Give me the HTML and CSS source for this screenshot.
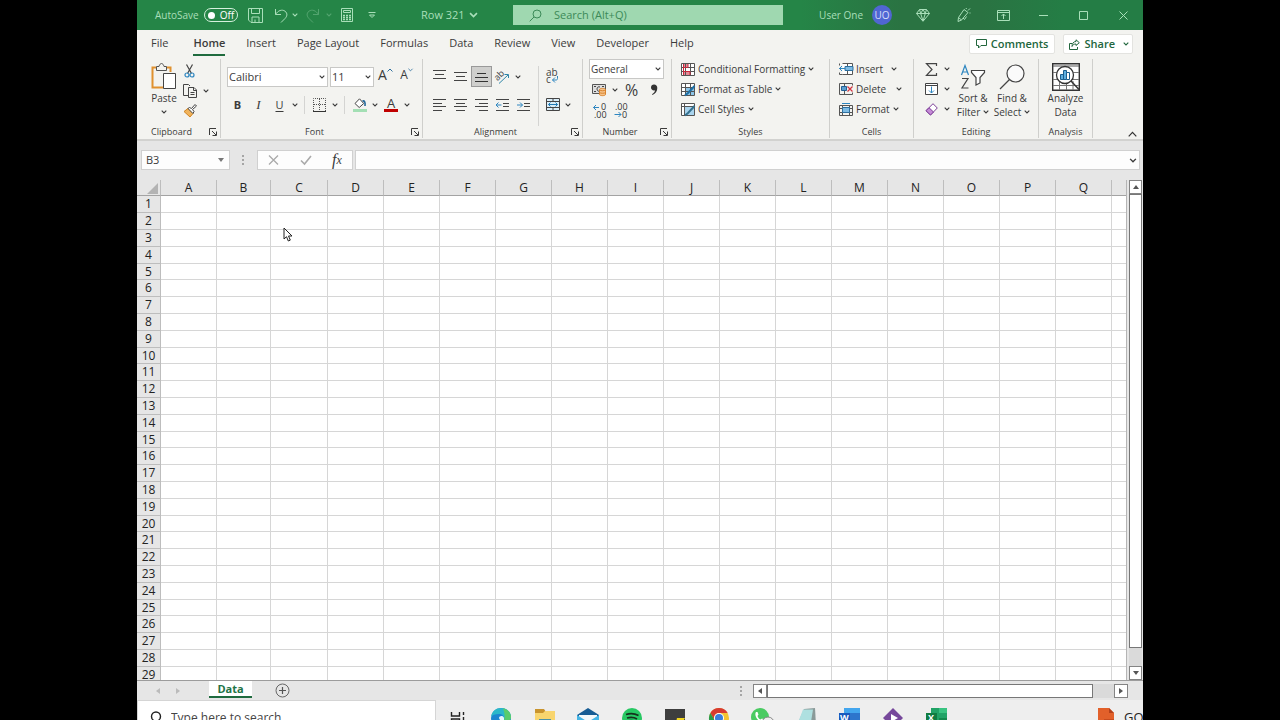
FILE: index.html
```html
<!DOCTYPE html>
<html lang="en">
<head>
    <meta charset="UTF-8">
    <meta name="viewport" content="width=device-width, initial-scale=1.0">
    <title>Row 321 - Excel</title>
    <link rel="stylesheet" href="styles.css">
</head>
<body>
    <svg class="symbols" aria-hidden="true">
        <symbol id="caret" viewBox="0 0 6 4"><path d="M.7.7 3 3 5.300.7" fill="none" stroke="currentColor" stroke-width="1.1"/></symbol>
        <symbol id="launcher" viewBox="0 0 8 8"><path d="M.5 7V.5H7M3 3l4 4M7.500 3.500v4h-4" fill="none" stroke="currentColor"/></symbol>
    </svg>

    <div class="window">
        <header class="titlebar">
            <div class="quick-access">
                <label class="autosave">AutoSave
                    <input type="checkbox" class="autosave-input">
                    <span class="toggle"><span class="knob"></span>Off</span>
                </label>
                <button class="quick-btn" aria-label="Save"><svg width="15" height="15" viewBox="0 0 15 15"><path d="M.5.5h14v14H3L.5 12zM3.500.5v5h8v-5M4 14.500V9h7v5.500M7 14v-2.500" /></svg></button>
                <button class="quick-btn undo" aria-label="Undo"><svg width="14" height="15" viewBox="0 0 14 15"><path d="M1.500 1v5.500H7M1.500 6.500C4 2.500 8 1 11 3.200c3 2.300 2 5.300 0 7.300L7 14.500"/></svg></button>
                <button class="quick-caret" aria-label="Undo options"><svg width="6" height="4"><use href="#caret"/></svg></button>
                <button class="quick-btn faded" aria-label="Redo"><svg width="14" height="15" viewBox="0 0 14 15"><path d="M12.500 1v5.500H7M12.500 6.500C10 2.500 6 1 3 3.200c-3 2.300-2 5.300 0 7.300l4 4"/></svg></button>
                <button class="quick-caret faded" aria-label="Redo options"><svg width="6" height="4"><use href="#caret"/></svg></button>
                <button class="quick-btn calc" aria-label="Calculator"><svg width="12" height="14" viewBox="0 0 12 14"><path d="M.5.5h11v13H.5zM2.500 2.500h7v2h-7z"/><path d="M2 7.500h8M2 9.500h8M2 11.500h8" stroke-width="1.500" stroke-dasharray="2 1"/></svg></button>
                <button class="quick-btn" aria-label="Customize toolbar"><svg width="8" height="7" viewBox="0 0 8 7"><path d="M.5.5h7M1.500 3 4 5.500 6.500 3z"/></svg></button>
            </div>
            <button class="doc-title">Row 321 <svg width="9" height="6"><use href="#caret"/></svg></button>
            <label class="search">
                <svg width="13" height="13" viewBox="0 0 13 13"><circle cx="8" cy="5" r="4"/><path d="M5 8 .7 12.300"/></svg>
                <input type="search" placeholder="Search (Alt+Q)" aria-label="Search">
            </label>
            <div class="account">User One <span class="avatar">UO</span></div>
            <div class="window-buttons">
                <button aria-label="Premium"><svg width="14" height="13" viewBox="0 0 14 13"><path d="M3.500.5h7l3 4L7 12.300.5 4.500zM.5 4.500h13M3.500.5l1.200 4L7 12l2.300-7.500 1.200-4M4.700 4.500 7 .5l2.300 4"/></svg></button>
                <button aria-label="Draw"><svg width="15" height="14" viewBox="0 0 15 14"><path d="M8 1.500 2.500 9.500l-.5 4 3.500-1.500 6.500-7.500zM2.500 9.500l3 2.500M7 10l1.500 1.500 2-3M10 1l.5-1M12 2.500 14 .5M13.500 5h1"/></svg></button>
                <button aria-label="Ribbon display"><svg width="13" height="11" viewBox="0 0 13 11"><path d="M.5.5h12v10H.5zM.5 2.500h12M6.500 9V4M4.500 6l2-2 2 2"/></svg></button>
                <button aria-label="Minimize"><svg width="9" height="9" viewBox="0 0 9 9"><path d="M0 4.500h9"/></svg></button>
                <button aria-label="Maximize"><svg width="9" height="9" viewBox="0 0 9 9"><path d="M.5.5h8v8h-8z"/></svg></button>
                <button aria-label="Close"><svg width="9" height="9" viewBox="0 0 9 9"><path d="m.5.5 8 8M8.500.5l-8 8"/></svg></button>
            </div>
        </header>

        <nav class="tabs">
            <a href="#" class="tab tab-file">File</a>
            <a href="#" class="tab active">Home</a>
            <a href="#" class="tab">Insert</a>
            <a href="#" class="tab">Page Layout</a>
            <a href="#" class="tab">Formulas</a>
            <a href="#" class="tab">Data</a>
            <a href="#" class="tab">Review</a>
            <a href="#" class="tab">View</a>
            <a href="#" class="tab">Developer</a>
            <a href="#" class="tab">Help</a>
            <div class="tab-actions">
                <button class="action"><svg width="11" height="10" viewBox="0 0 11 10"><path d="M.5.5h10v6H5l-2.500 2.500V6.500h-2z"/></svg>Comments</button>
                <button class="action share"><svg width="11" height="11" viewBox="0 0 11 11"><path d="M3 4.500H.5v6h8V8M7 .8l3.300 2.900L7 6.500V5C5 5 4 5.500 3 7.500 3 4.500 4.500 2.500 7 2.500z"/></svg>Share <svg width="6" height="4"><use href="#caret"/></svg></button>
            </div>
        </nav>

        <div class="ribbon">
            <section class="group clipboard">
                <div class="group-body">
                    <button class="big-btn">
                        <svg width="26" height="28" viewBox="0 0 26 28"><path d="M5 4.500H1.500v20H12M16 4.500h3.500V9" fill="none" stroke="#e0912f" stroke-width="2"/><path d="M5.500 7.500v-4H8C8.500 1.500 9.500.5 10.500.5s2 1 2.500 3h2.500v4z" fill="#f3f3f0" stroke="#555"/><path d="M12.500 10.500h12v15h-12z" fill="#fff" stroke="#444"/></svg>
                        <span>Paste</span>
                        <svg width="6" height="4"><use href="#caret"/></svg>
                    </button>
                    <div class="stack">
                        <button aria-label="Cut"><svg width="13" height="14" viewBox="0 0 13 14"><path d="m3.500.5 5 9M9.500.5l-5 9" fill="none" stroke="#444" stroke-width="1.200"/><circle cx="4" cy="11" r="2" fill="none" stroke="#2e86c0" stroke-width="1.200"/><circle cx="9" cy="11" r="2" fill="none" stroke="#2e86c0" stroke-width="1.200"/></svg></button>
                        <button aria-label="Copy"><svg width="14" height="14" viewBox="0 0 14 14"><path d="M5 11.500H.5V.5h5L7 2" fill="none" stroke="#444"/><path d="M5.500 3.500H11l2.500 2.500v7.500h-8zM10.500 3.500v3h3M7.500 8.500h4M7.500 10.500h4" fill="none" stroke="#444"/></svg><svg width="6" height="4"><use href="#caret"/></svg></button>
                        <button aria-label="Format Painter"><svg width="14" height="14" viewBox="0 0 14 14"><path d="M1 7.500 5 4.500l5 5L7 13z" fill="#f0b35c" stroke="#d28420"/><path d="m5 4.500 1.500-1 2 1 3.500-4L13.500 2 9.500 5.500l1.500 2-1 2z" fill="#fff" stroke="#444"/></svg></button>
                    </div>
                </div>
                <footer><span>Clipboard</span><button class="launch" aria-label="Clipboard settings"><svg width="8" height="8"><use href="#launcher"/></svg></button></footer>
            </section>

            <section class="group font">
                <div class="group-body">
                    <div class="tool-row">
                        <div class="dropdown font-name"><select aria-label="Font"><option>Calibri</option></select><svg width="6" height="4"><use href="#caret"/></svg></div>
                        <div class="dropdown font-size"><select aria-label="Font size"><option>11</option></select><svg width="6" height="4"><use href="#caret"/></svg></div>
                        <button class="tool grow" aria-label="Increase font size"><span>A</span><svg width="6" height="4" viewBox="0 0 6 4"><path d="M.5 3.500 3 1l2.500 2.500" fill="none" stroke="#2e6f9e"/></svg></button>
                        <button class="tool shrink" aria-label="Decrease font size"><span>A</span><svg width="5" height="4" viewBox="0 0 6 4"><path d="M.5.5 3 3 5.500.5" fill="none" stroke="#2e6f9e"/></svg></button>
                    </div>
                    <div class="tool-row">
                        <button class="tool bold">B</button>
                        <button class="tool italic">I</button>
                        <button class="tool underline">U</button>
                        <button class="tool-caret" aria-label="Underline options"><svg width="6" height="4"><use href="#caret"/></svg></button>
                        <span class="divider"></span>
                        <button class="tool" aria-label="Borders"><svg width="13" height="14" viewBox="0 0 13 14"><path d="M.5 13V.5h12V13M6.500 1v12M1 6.500h11" fill="none" stroke="#555" stroke-dasharray="1 1"/><path d="M0 13.500h13" stroke="#333"/></svg></button>
                        <button class="tool-caret" aria-label="Border options"><svg width="6" height="4"><use href="#caret"/></svg></button>
                        <span class="divider"></span>
                        <button class="tool" aria-label="Fill color"><svg width="14" height="14" viewBox="0 0 14 14"><path d="M0 11h14v3H0z" fill="#a3dfb4"/><path d="m6.500.8 4.200 4.700-4.500 4L2 5.500z" fill="#fff" stroke="#444"/><path d="M9.500 3c2-.5 3 1 2.500 5" fill="none" stroke="#24699a" stroke-width="1.600"/></svg></button>
                        <button class="tool-caret" aria-label="Fill options"><svg width="6" height="4"><use href="#caret"/></svg></button>
                        <button class="tool font-color">A</button>
                        <button class="tool-caret" aria-label="Font color options"><svg width="6" height="4"><use href="#caret"/></svg></button>
                    </div>
                </div>
                <footer><span>Font</span><button class="launch" aria-label="Font settings"><svg width="8" height="8"><use href="#launcher"/></svg></button></footer>
            </section>

            <section class="group alignment">
                <div class="group-body">
                    <div class="align-main">
                        <div class="tool-row">
                            <button class="tool" aria-label="Top align"><svg width="13" height="13" viewBox="0 0 13 13"><path d="M0 .5h13M2 4.500h9M0 8.500h13" stroke="#444"/></svg></button>
                            <button class="tool" aria-label="Middle align"><svg width="13" height="13" viewBox="0 0 13 13"><path d="M0 2.500h13M2 6.500h9M0 10.500h13" stroke="#444"/></svg></button>
                            <button class="tool pressed" aria-label="Bottom align"><svg width="13" height="13" viewBox="0 0 13 13"><path d="M2 3.500h9M0 7.500h13M0 11.500h13" stroke="#333"/></svg></button>
                            <button class="tool" aria-label="Orientation"><svg width="15" height="14" viewBox="0 0 15 14"><text x="0" y="9" font-size="9" fill="#444" transform="rotate(-45 4 7)">ab</text><path d="M4 13.500 13 5M9.500 4.500H13.500V8" fill="none" stroke="#2e86a8"/></svg></button>
                            <button class="tool-caret" aria-label="Orientation options"><svg width="6" height="4"><use href="#caret"/></svg></button>
                        </div>
                        <div class="tool-row">
                            <button class="tool" aria-label="Align left"><svg width="13" height="12" viewBox="0 0 13 12"><path d="M0 .5h13M0 4.500h9M0 7.500h13M0 11.500h9" stroke="#444"/></svg></button>
                            <button class="tool" aria-label="Center"><svg width="13" height="12" viewBox="0 0 13 12"><path d="M0 .5h13M2 4.500h9M0 7.500h13M2 11.500h9" stroke="#444"/></svg></button>
                            <button class="tool" aria-label="Align right"><svg width="13" height="12" viewBox="0 0 13 12"><path d="M0 .5h13M4 4.500h9M0 7.500h13M4 11.500h9" stroke="#444"/></svg></button>
                            <button class="tool" aria-label="Decrease indent"><svg width="13" height="12" viewBox="0 0 13 12"><path d="M0 .5h13M7 4.500h6M7 7.500h6M0 11.500h13" stroke="#444"/><path d="M0 6h5.500M2.500 3.500 0 6l2.500 2.500" fill="none" stroke="#2e86c0"/></svg></button>
                            <button class="tool" aria-label="Increase indent"><svg width="13" height="12" viewBox="0 0 13 12"><path d="M0 .5h13M7 4.500h6M7 7.500h6M0 11.500h13" stroke="#444"/><path d="M0 6h5.500M3 3.500 5.500 6 3 8.500" fill="none" stroke="#2e86c0"/></svg></button>
                        </div>
                    </div>
                    <div class="align-side">
                        <div class="tool-row">
                            <button class="tool" aria-label="Wrap text"><svg width="13" height="15" viewBox="0 0 13 15"><text x="0" y="7" font-size="10" fill="#444">ab</text><text x="0" y="14" font-size="10" fill="#444">c</text><path d="M11.500 7v2.500c0 1-.5 1.500-1.500 1.500H6.500M9 8.500 6.500 11 9 13.500" fill="none" stroke="#2e86c0"/></svg></button>
                        </div>
                        <div class="tool-row">
                            <button class="tool" aria-label="Merge"><svg width="14" height="13" viewBox="0 0 14 13"><path d="M.5.5h13v12H.5z" fill="#d9edf8" stroke="#444"/><path d="M.5 3.500h13M.5 9.500h13M7 .5v3M7 9.500v3" stroke="#444"/><path d="M2.500 6.500h9M4.500 4.500l-2 2 2 2M9.500 4.500l2 2-2 2" fill="none" stroke="#1f7ab5"/></svg></button>
                            <button class="tool-caret" aria-label="Merge options"><svg width="6" height="4"><use href="#caret"/></svg></button>
                        </div>
                    </div>
                </div>
                <footer><span>Alignment</span><button class="launch" aria-label="Alignment settings"><svg width="8" height="8"><use href="#launcher"/></svg></button></footer>
            </section>

            <section class="group number">
                <div class="group-body">
                    <div class="dropdown"><select aria-label="Number format"><option>General</option></select><svg width="6" height="4"><use href="#caret"/></svg></div>
                    <div class="tool-row">
                        <button class="tool" aria-label="Accounting format"><svg width="15" height="12" viewBox="0 0 15 12"><path d="M.5.5h13v9H.5z" fill="#ddd" stroke="#555"/><path d="M2 2.500h2M2 7.500h2M8 3C6 2 5 4 5 5s1 3 3 2M10 2.500h2" fill="none" stroke="#444"/><path d="M7.500 5.500c0-1.500 6-1.500 6 0v5c0 1.500-6 1.500-6 0z" fill="#f6c48b" stroke="#d9822b"/><path d="M7.500 6c1 1 5 1 6 0M7.500 8.500c1 1 5 1 6 0" fill="none" stroke="#d9822b"/></svg></button>
                        <button class="tool-caret" aria-label="Accounting options"><svg width="6" height="4"><use href="#caret"/></svg></button>
                        <button class="tool percent">%</button>
                        <button class="tool" aria-label="Comma style"><svg width="8" height="12" viewBox="0 0 8 12"><path d="M4 .5c2 0 3.300 1.300 3.300 3.500 0 3-1.800 5.800-4.800 7l-.5-.8C4 9 5 7.700 5 6.300 3 7 1 5.700 1 3.600 1 1.800 2.200.5 4 .5z" fill="#333"/></svg></button>
                    </div>
                    <div class="tool-row">
                        <button class="tool" aria-label="Increase decimal"><svg width="14" height="14" viewBox="0 0 14 14"><text x="8" y="6" font-size="9" fill="#333">0</text><text x="1" y="14" font-size="9" fill="#333">.00</text><path d="M.5 3.500H6M3 1 .5 3.500 3 6" fill="none" stroke="#2e86c0"/></svg></button>
                        <button class="tool" aria-label="Decrease decimal"><svg width="14" height="14" viewBox="0 0 14 14"><text x="1" y="6" font-size="9" fill="#333">.00</text><text x="8" y="14" font-size="9" fill="#333">0</text><path d="M.5 10.500H7M4.500 8 7 10.500 4.500 13" fill="none" stroke="#2e86c0"/></svg></button>
                    </div>
                </div>
                <footer><span>Number</span><button class="launch" aria-label="Number settings"><svg width="8" height="8"><use href="#launcher"/></svg></button></footer>
            </section>

            <section class="group styles">
                <div class="group-body">
                    <button class="row-btn"><svg width="14" height="13" viewBox="0 0 14 13"><path d="M.5.5h13v12H.5z" fill="#fff" stroke="#555"/><path d="M2 1h5v3H2zM2 8h7v4H2z" fill="#e58a96"/><path d="M.5 4.500h13M.5 8.500h13M4.500.5v12M9.500.5v12" stroke="#555"/><path d="M2.500 1v11M2.500 4.500H7V1M2.500 8.500H9V12" fill="none" stroke="#c8283c"/></svg>Conditional Formatting<svg class="arrow" width="6" height="4"><use href="#caret"/></svg></button>
                    <button class="row-btn"><svg width="14" height="13" viewBox="0 0 14 13"><path d="M.5.5h13v12H.5z" fill="#fff" stroke="#555"/><path d="M5 4h8v8H5z" fill="#8cc6ea"/><path d="M.5 4.500h13M.5 8.500h13M4.500.5v12M9.500.5v12" stroke="#555"/><path d="M13.500 3 7 10l-3 2.500" stroke="#1d6fa5" stroke-width="2" fill="none"/></svg>Format as Table<svg class="arrow" width="6" height="4"><use href="#caret"/></svg></button>
                    <button class="row-btn"><svg width="14" height="13" viewBox="0 0 14 13"><path d="M.5.5h13v12H.5z" fill="#fff" stroke="#555"/><path d="M4 4h9v8H4z" fill="#a9d4ee"/><path d="M.5 3.500h13M3.500.5v12" stroke="#555"/><path d="M13.500 3 7 10l-3 2.500" stroke="#35718f" stroke-width="2" fill="none"/></svg>Cell Styles<svg class="arrow" width="6" height="4"><use href="#caret"/></svg></button>
                </div>
                <footer><span>Styles</span></footer>
            </section>

            <section class="group cells">
                <div class="group-body">
                    <button class="row-btn"><svg width="14" height="12" viewBox="0 0 14 12"><path d="M3.500.5h10v11h-10M.5.5v2M.5 9.500v2h3M8.500.5v11" fill="#fff" stroke="#555"/><path d="M6 3.500h8v4H6z" fill="#7dbbe4" stroke="#2e6f9e"/><path d="M0 5.500h6M3 3 .5 5.500 3 8" fill="none" stroke="#2e86c0"/></svg><span>Insert</span><svg class="arrow" width="6" height="4"><use href="#caret"/></svg></button>
                    <button class="row-btn wide"><svg width="14" height="12" viewBox="0 0 14 12"><path d="M.5.5h13M.5 11.500h13M.5.5v11M5.500.5v11M13.500.5v2M13.500 9.500v2" stroke="#555"/><path d="M2.500 3.500h5v4h-5z" fill="#5b9fd0" stroke="#245f94"/><path d="m8.500 3.500 5 5M13.500 3.500l-5 5" stroke="#d1343f" stroke-width="1.200"/></svg><span>Delete</span><svg class="arrow" width="6" height="4"><use href="#caret"/></svg></button>
                    <button class="row-btn"><svg width="14" height="13" viewBox="0 0 14 13"><path d="M.5 2.500h13v10H.5zM3.500 2v10.500M10.500 2v10.500M.5 9.500h13M.5 5.500h13" fill="none" stroke="#555"/><path d="M3.500 4.500h7v5h-7z" fill="#7dbbe4" stroke="#2e6f9e"/><path d="M3 .5h8" stroke="#2e86c0"/></svg><span>Format</span><svg class="arrow" width="6" height="4"><use href="#caret"/></svg></button>
                </div>
                <footer><span>Cells</span></footer>
            </section>

            <section class="group editing">
                <div class="group-body">
                    <div class="stack">
                        <button aria-label="AutoSum"><svg width="13" height="13" viewBox="0 0 13 13"><path d="M11.500 3V.7H1.500L7 6.500l-5.500 5.800h10V10" fill="none" stroke="#444" stroke-width="1.200"/></svg><svg width="6" height="4"><use href="#caret"/></svg></button>
                        <button aria-label="Fill"><svg width="13" height="12" viewBox="0 0 13 12"><path d="M.5.5h12v11H.5zM.5 2.500h12" fill="#fff" stroke="#444"/><path d="M6.500 3.500V10M4 7.500 6.500 10 9 7.500" fill="none" stroke="#2e86c0"/></svg><svg width="6" height="4"><use href="#caret"/></svg></button>
                        <button aria-label="Clear"><svg width="13" height="13" viewBox="0 0 13 13"><path d="M8 .7 12.300 5 5.500 12 1 7.700z" fill="#fff" stroke="#7b3c96"/><path d="M4 4.700 8.500 9l-3 3L1 7.700z" fill="#c58ad6" stroke="#7b3c96"/></svg><svg width="6" height="4"><use href="#caret"/></svg></button>
                    </div>
                    <button class="big-btn sort">
                        <svg width="26" height="28" viewBox="0 0 26 28"><path d="M1.500 12 5 2.500 8.500 12M2.700 9h4.600" fill="none" stroke="#2e86c0" stroke-width="1.200"/><path d="M2 15.500h6L2 25h6.500" fill="none" stroke="#444" stroke-width="1.200"/><path d="M11.500 7.500h13v2L20 14.500V20l-4 2v-7.500l-4.500-5z" fill="#fff" stroke="#444" stroke-width="1.200"/></svg>
                        <span>Sort &amp;</span><span>Filter <svg width="6" height="4"><use href="#caret"/></svg></span>
                    </button>
                    <button class="big-btn">
                        <svg width="26" height="28" viewBox="0 0 26 28"><circle cx="16.500" cy="10.500" r="8.500" fill="#fafafa" stroke="#444" stroke-width="1.200"/><path d="M10.500 16.500 1 26" stroke="#444" stroke-width="1.300"/></svg>
                        <span>Find &amp;</span><span>Select <svg width="6" height="4"><use href="#caret"/></svg></span>
                    </button>
                </div>
                <footer><span>Editing</span></footer>
            </section>

            <section class="group analysis">
                <div class="group-body">
                    <button class="big-btn">
                        <svg width="28" height="28" viewBox="0 0 28 28"><path d="M.7.7h26.600v26.600H.7z" fill="#fff" stroke="#333" stroke-width="1.400"/><path d="M1 3h26" stroke="#555" stroke-width="1"/><path d="M1 9.500h26M1 16.500h26M1 22.500h26M7.500 18v9M14.500 18v9M21 18v9" stroke="#777"/><circle cx="13" cy="12" r="8.500" fill="#fff" stroke="#333" stroke-width="1.300"/><path d="m19 18 8 8.500" stroke="#333" stroke-width="1.500"/><path d="M8.500 11.500h3v5h-3zM11.500 7.500h3v9h-3z" fill="#5fafe0" stroke="#1c5f8e"/><path d="M14.500 9.500h3v7h-3z" fill="#fff" stroke="#1c5f8e"/></svg>
                        <span>Analyze</span><span>Data</span>
                    </button>
                </div>
                <footer><span>Analysis</span></footer>
            </section>
            <button class="collapse" aria-label="Collapse the ribbon"><svg width="9" height="6" viewBox="0 0 9 6"><path d="m.7 5.300 3.800-4 3.800 4" fill="none" stroke="#333" stroke-width="1.200"/></svg></button>
        </div>

        <div class="formula-bar">
            <div class="name-box">
                <input type="text" value="B3" aria-label="Name box">
                <svg width="6" height="4" viewBox="0 0 6 4"><path d="M0 0h6L3 4z" fill="#777"/></svg>
            </div>
            <span class="grip"></span>
            <div class="entry-buttons">
                <button aria-label="Cancel"><svg width="11" height="10" viewBox="0 0 11 10"><path d="m1 .5 9 9M10 .5l-9 9" stroke="#aaa" stroke-width="1.300"/></svg></button>
                <button aria-label="Enter"><svg width="12" height="10" viewBox="0 0 12 10"><path d="m1 5.500 3.500 3.500L11 1" fill="none" stroke="#aaa" stroke-width="1.600"/></svg></button>
                <button class="fx" aria-label="Insert function">f<small>x</small></button>
            </div>
            <div class="formula">
                <input type="text" aria-label="Formula">
                <svg width="8" height="5"><use href="#caret"/></svg>
            </div>
        </div>

        <main class="workbook">
            <div class="sheet">
                <table class="grid">
                    <colgroup>
                        <col class="col-head"><col><col class="col-b"><col class="col-c"><col><col><col><col><col><col><col><col><col><col><col><col><col><col><col class="col-rest">
                    </colgroup>
                    <thead>
                        <tr id="letters"><th class="corner"><svg width="11" height="11" viewBox="0 0 11 11"><path d="M11 0v11H0z" fill="#b3b3b3"/></svg></th></tr>
                    </thead>
                    <tbody id="rows"></tbody>
                </table>
            </div>
            <div class="scroll-y">
                <button aria-label="Scroll up"><svg width="6" height="4" viewBox="0 0 6 4"><path d="M0 4h6L3 0z"/></svg></button>
                <span class="thumb"></span>
                <button aria-label="Scroll down"><svg width="6" height="4" viewBox="0 0 6 4"><path d="M0 0h6L3 4z"/></svg></button>
            </div>
        </main>

        <div class="sheet-bar">
            <div class="sheet-nav">
                <button aria-label="Previous sheet"><svg width="4" height="6" viewBox="0 0 4 6"><path d="M4 0v6L0 3z"/></svg></button>
                <button aria-label="Next sheet"><svg width="4" height="6" viewBox="0 0 4 6"><path d="M0 0v6l4-3z"/></svg></button>
            </div>
            <button class="sheet-tab">Data</button>
            <button class="add-sheet" aria-label="New sheet"><svg width="15" height="15" viewBox="0 0 15 15"><circle cx="7.500" cy="7.500" r="6.500" fill="none" stroke="#666"/><path d="M7.500 4v7M4 7.500h7" stroke="#555" stroke-width="1.200"/></svg></button>
            <span class="grip"></span>
            <div class="scroll-x">
                <button aria-label="Scroll left"><svg width="4" height="6" viewBox="0 0 4 6"><path d="M4 0v6L0 3z"/></svg></button>
                <span class="thumb"></span>
                <button aria-label="Scroll right"><svg width="4" height="6" viewBox="0 0 4 6"><path d="M0 0v6l4-3z"/></svg></button>
            </div>
        </div>

        <footer class="taskbar">
            <label class="task-search">
                <svg width="13" height="14" viewBox="0 0 13 14"><circle cx="7" cy="5.500" r="4.500"/><path d="M4 9 .7 13"/></svg>
                <input type="text" placeholder="Type here to search" aria-label="Type here to search">
            </label>
            <div class="apps">
                <button aria-label="Task view"><svg width="16" height="20" viewBox="0 0 16 20"><path d="M1.500 4v4h8V4M1.500 19v-8h8v8M13.500 4v3M13.500 9v3M13.500 14v5" fill="none" stroke="#222" stroke-width="1.400"/></svg></button>
                <button aria-label="Edge"><svg width="20" height="20" viewBox="0 0 20 20"><circle cx="10" cy="10" r="10" fill="#1c86cf"/><path d="M0 9C1 3 5 0 10 0c6 0 10 4 10 9 0 4-4 5-7 4 1-4-1-7-5-7-4 0-7 1-8 3z" fill="#2bb8c9"/><path d="M12 .2C17 1 20 5 20 9c0 4-4 5-7 4 1-4 1-7-1-12.800z" fill="#59cc6b"/><path d="M8 10c0-2 4-3 5 0v2h-4z" fill="#e8f5fa"/></svg></button>
                <button aria-label="File Explorer"><svg width="20" height="18" viewBox="0 0 20 18"><path d="M0 0h9l2 3h9v15H0z" fill="#c9942e"/><path d="M0 4h8l2-2h10v16H0z" fill="#f8d56e"/><path d="M4 10h12v8H4z" fill="#4d93a8"/></svg></button>
                <button aria-label="Mail"><svg width="22" height="20" viewBox="0 0 22 20"><path d="M0 7 11 0l11 7v13H0z" fill="#175c94"/><path d="M2 7h18v10H2z" fill="#f4f8fa"/><path d="m0 7 11 7 11-7v13H0z" fill="#45b5e6"/></svg></button>
                <button aria-label="Spotify"><svg width="20" height="20" viewBox="0 0 20 20"><circle cx="10" cy="10" r="10" fill="#27c863"/><path d="M4 6.500c5-1.500 9-.8 12.500 1M5 10c4-1 7.500-.5 10 1M6 13c3-.8 6-.3 8 1" fill="none" stroke="#15301e" stroke-width="1.800"/></svg></button>
                <button aria-label="Sticky Notes"><svg width="20" height="18" viewBox="0 0 20 18"><path d="M0 0h20v18H0z" fill="#3e3e3e"/><path d="M12 9h8l-5 9h-5z" fill="#f2d51e"/></svg></button>
                <button aria-label="Chrome"><svg width="20" height="20" viewBox="0 0 20 20"><circle cx="10" cy="10" r="10" fill="#f5c431"/><path d="M10 0a10 10 0 0 1 8.700 5H10a5 5 0 0 0-4.300 7.500L1.300 5A10 10 0 0 1 10 0z" fill="#d83b30"/><path d="m1.300 5 5.500 9 2 6A10 10 0 0 1 1.300 5z" fill="#2c9c4b"/><circle cx="10" cy="10" r="5" fill="#fff"/><circle cx="10" cy="10" r="4" fill="#3c7fdd"/></svg></button>
                <button aria-label="WhatsApp"><svg width="22" height="20" viewBox="0 0 22 20"><circle cx="9" cy="9" r="9" fill="#4acb62"/><path d="M5 4c-2 3 1 9 6 10 2 0 3-1 3-2l-3-1.500-1.500 1C8 11 7 9.500 6.500 8l1-1.500L6.500 4z" fill="#fff"/><circle cx="17" cy="15" r="6" fill="#eee" stroke="#888"/></svg></button>
                <button aria-label="Notepad"><svg width="20" height="20" viewBox="0 0 20 20"><path d="m8 1 11-1 1 17-5 3H0z" fill="#8a9a99"/><path d="M7 1.500h10L14 20H0z" fill="#aee0e0"/></svg></button>
                <button aria-label="Word"><svg width="21" height="20" viewBox="0 0 21 20"><path d="M5 0h16v20H5z" fill="#2d75cc"/><path d="M5 0h16v5H5z" fill="#43a6ee"/><path d="M0 5h11v11H0z" fill="#185abd"/><text x="1" y="13" font-size="9" font-weight="700" fill="#fff">W</text></svg></button>
                <button aria-label="Video Editor"><svg width="20" height="20" viewBox="0 0 20 20"><path d="m10 0 10 10-10 10L0 10z" fill="#76489b"/><path d="m8 6 7 4-7 4z" fill="#fff"/></svg></button>
                <button aria-label="Excel"><svg width="21" height="20" viewBox="0 0 21 20"><path d="M5 0h16v20H5z" fill="#21a366"/><path d="M13 0h8v5h-8z" fill="#39c481"/><path d="M13 10h8v10h-8z" fill="#13884b"/><path d="M0 5h11v11H0z" fill="#107c41"/><text x="2" y="13" font-size="9" font-weight="700" fill="#fff">X</text></svg></button>
            </div>
            <button class="tray-app" aria-label="Presentation"><svg width="16" height="20" viewBox="0 0 16 20"><path d="M0 0h11l5 5v15H0z" fill="#e2602a"/><path d="m11 0 5 5h-5z" fill="#b3401a"/><path d="M6 11h10v9H6z" fill="#c84b1e"/></svg></button>
            <span class="tray-text">GO</span>
        </footer>

        <svg class="pointer" width="10" height="15" viewBox="0 0 10 15"><path d="M1 1v11l2.500-2.300L5.300 14l2-.9-1.800-4.100H9z" fill="#fff" stroke="#222"/></svg>
    </div>

    <script>
        const columns = 'ABCDEFGHIJKLMNOPQ'.split('').concat('');
        const rowCount = 29;

        const letters = document.getElementById('letters');
        columns.forEach(name => {
            const th = document.createElement('th');
            th.textContent = name;
            letters.appendChild(th);
        });

        const rows = document.getElementById('rows');
        for (let i = 1; i <= rowCount; i++) {
            const tr = document.createElement('tr');
            tr.innerHTML = `<th>${i}</th>` + '<td></td>'.repeat(columns.length);
            rows.appendChild(tr);
        }
    </script>
</body>
</html>
```

FILE: styles.css
```css
* {
    margin: 0;
    padding: 0;
    box-sizing: border-box;
}

body {
    background: #000;
    padding: 0 137px;
    height: 100vh;
    overflow: hidden;
    font-family: "Open Sans", "Noto Sans", sans-serif;
    font-size: 11px;
    line-height: 14px;
    color: #3b3b3b;
}

button,
input,
select {
    font: inherit;
    color: inherit;
    background: none;
    border: none;
    outline: none;
    min-width: 0;
}

button {
    display: flex;
    align-items: center;
    justify-content: center;
    cursor: pointer;
}

svg {
    display: block;
    flex: none;
    overflow: visible;
}

a {
    color: inherit;
    text-decoration: none;
}

.symbols {
    display: none;
}

.window {
    position: relative;
    display: flex;
    flex-direction: column;
    height: 100%;
    overflow: hidden;
    background: #e6e6e6;
}

/* title bar */

.titlebar {
    flex: 0 0 30px;
    display: flex;
    align-items: center;
    background: linear-gradient(to right, #258547 0 66%, #2a7342 76% 84%, #247d45 92%);
    color: #a9dfb9;
}

.titlebar svg {
    fill: none;
    stroke: currentColor;
}

.quick-access {
    flex: 0 0 284px;
    display: flex;
    align-items: center;
    padding-left: 18px;
}

.autosave {
    display: flex;
    align-items: center;
    gap: 5px;
    margin-right: 10px;
    font-size: 10px;
}

.autosave-input {
    position: absolute;
    opacity: 0;
}

.toggle {
    display: flex;
    align-items: center;
    gap: 5px;
    width: 34px;
    height: 14px;
    padding-left: 3px;
    border: 1px solid #d5f0dc;
    border-radius: 7px;
    font-size: 10px;
    color: #fff;
}

.knob {
    width: 7px;
    height: 7px;
    border-radius: 50%;
    background: #fff;
}

.quick-btn {
    width: 16px;
    margin-right: 9px;
}

.undo {
    margin-right: 2px;
}

.quick-caret {
    width: 8px;
    margin-right: 6px;
}

.quick-btn.faded {
    margin-right: 4px;
}

.calc {
    margin-right: 9px;
}

.faded {
    opacity: .35;
}

.doc-title {
    flex: 0 0 92px;
    justify-content: flex-start;
    gap: 4px;
}

.search {
    flex: 1;
    display: flex;
    align-items: center;
    gap: 12px;
    height: 20px;
    padding-left: 16px;
    background: #9fd8b0;
    color: #3c8a58;
}

.search input {
    flex: 1;
    appearance: none;
}

.search input::placeholder {
    color: #3c8a58;
}

.account {
    display: flex;
    align-items: center;
    gap: 9px;
    padding: 0 11px 0 36px;
    font-size: 10px;
}

.avatar {
    width: 20px;
    height: 20px;
    border-radius: 50%;
    background: #5066d2;
    color: #d7defa;
    font-size: 10px;
    line-height: 20px;
    text-align: center;
}

.window-buttons {
    display: flex;
}

.window-buttons button {
    width: 40px;
    height: 30px;
}

/* ribbon tabs */

.tabs {
    flex: 0 0 28px;
    display: flex;
    align-items: center;
    gap: 21px;
    padding: 0 10px 0 14px;
    background: #f3f3f0;
}

.tab {
    padding: 4px 0;
    border-bottom: 2px solid transparent;
}

.tab-file {
    margin-right: 4px;
}

.tab.active {
    font-weight: 600;
    border-color: #1f6b3e;
}

.tab-actions {
    display: flex;
    gap: 8px;
    margin-left: auto;
}

.action {
    gap: 4px;
    height: 20px;
    padding: 0 6px;
    border: 1px solid #e3e3e0;
    border-radius: 2px;
    background: #fff;
    color: #22663d;
    font-weight: 600;
}

.action svg {
    fill: none;
    stroke: currentColor;
}

.share {
    padding: 0 3px 0 5px;
}

.share svg:last-child {
    margin-left: 4px;
}

/* ribbon */

.ribbon {
    flex: 0 0 83px;
    display: flex;
    background: #f3f3f0;
    border-bottom: 2px solid #d2d2d0;
}

.group {
    display: flex;
    flex-direction: column;
    border-right: 1px solid #cfcfcc;
    margin: 1px 0;
}

.group-body {
    flex: 1;
    display: flex;
    min-height: 0;
}

.group footer {
    display: flex;
    align-items: center;
    height: 12px;
    font-size: 9px;
    line-height: 12px;
}

.group footer span {
    flex: 1;
    text-align: center;
}

.launch {
    width: 14px;
}

.stack {
    display: flex;
    flex-direction: column;
}

.stack button {
    height: 20px;
    gap: 6px;
    justify-content: flex-start;
}

.big-btn {
    flex-direction: column;
    justify-content: flex-start;
    line-height: 14px;
    font-size: 10px;
}

.big-btn > svg:last-child {
    margin-top: 5px;
}

.big-btn span {
    display: flex;
    align-items: center;
    gap: 3px;
    white-space: nowrap;
}

.tool-row {
    display: flex;
    align-items: center;
}

.tool {
    width: 21px;
    height: 21px;
}

.tool-caret {
    width: 10px;
    height: 21px;
}

.pressed {
    background: #cfcfcd;
    border: 1px solid #999;
}

.divider {
    width: 1px;
    height: 18px;
    margin: 0 4px;
    background: #d4d4d2;
}

.dropdown {
    display: grid;
    align-items: center;
    height: 20px;
    background: #fff;
    border: 1px solid #c8c8c6;
}

.dropdown > * {
    grid-area: 1 / 1;
}

.dropdown select {
    appearance: none;
    width: 100%;
    padding-left: 1px;
}

.dropdown svg {
    justify-self: end;
    margin-right: 2px;
    pointer-events: none;
}

.clipboard {
    flex: 0 0 84px;
}

.clipboard .group-body {
    gap: 6px;
    padding: 2px 0 0 14px;
}

.clipboard .big-btn {
    padding-top: 2px;
}

.clipboard footer {
    padding-left: 0;
}

.font {
    flex: 0 0 202px;
}

.font .group-body {
    flex-direction: column;
    gap: 7px;
    padding: 7px 0 0 6px;
}

.font-name {
    width: 101px;
    margin-right: 2px;
}

.font-size {
    width: 44px;
    margin-right: 1px;
}

.grow,
.shrink {
    align-items: flex-start;
    line-height: 18px;
}

.grow svg,
.shrink svg {
    margin-top: 2px;
}

.grow {
    font-size: 14px;
}

.shrink {
    font-size: 12px;
}

.bold {
    font-weight: 700;
}

.italic {
    font-family: "Liberation Serif", serif;
    font-size: 13px;
    font-style: italic;
}

.underline {
    text-decoration: underline;
    text-underline-offset: 2px;
}

.font-color {
    width: 14px;
    height: 15px;
    margin: 0 4px;
    font-size: 13px;
    line-height: 12px;
    border-bottom: 3px solid #c00000;
}

.alignment {
    flex: 0 0 160px;
}

.alignment .group-body {
    padding: 7px 0 0 6px;
}

.align-main,
.align-side {
    display: flex;
    flex-direction: column;
    gap: 7px;
}

.align-main {
    padding-right: 4px;
    border-right: 1px solid #d4d4d2;
}

.align-side {
    padding-left: 3px;
}

.number {
    flex: 0 0 89px;
}

.number .group-body {
    flex-direction: column;
    padding: 0 7px 0 6px;
}

.number .dropdown {
    font-size: 10px;
}

.number .percent {
    width: 23px;
    font-size: 16px;
}

.styles {
    flex: 0 0 158px;
}

.styles .group-body,
.cells .group-body {
    flex-direction: column;
    align-items: flex-start;
    padding-left: 9px;
}

.row-btn {
    gap: 3px;
    height: 20px;
    font-size: 10px;
    white-space: nowrap;
}

.cells {
    flex: 0 0 84px;
}

.cells .row-btn {
    width: 58px;
    justify-content: flex-start;
}

.cells .wide {
    width: 63px;
}

.cells .arrow {
    margin-left: auto;
}

.editing {
    flex: 0 0 125px;
}

.editing .group-body {
    gap: 5px;
    padding-left: 11px;
}

.editing .big-btn,
.analysis .big-btn {
    flex: 0 0 34px;
    padding-top: 4px;
}

.editing .stack {
    flex: 0 0 26px;
}

.analysis {
    flex: 0 0 54px;
}

.analysis .group-body {
    justify-content: center;
}

.collapse {
    margin-left: auto;
    align-items: flex-end;
    padding: 0 6px 2px;
}

/* formula bar */

.formula-bar {
    flex: 0 0 39px;
    display: flex;
    align-items: center;
    padding: 0 3px 1px 4px;
}

.name-box,
.formula {
    display: flex;
    align-items: center;
    min-width: 0;
    height: 20px;
    padding: 0 5px 0 4px;
    background: #fdfdfd;
    border: 1px solid #d0d0d0;
}

.name-box {
    flex: 0 0 89px;
}

.name-box input,
.formula input {
    flex: 1;
}

.grip {
    width: 2px;
    height: 10px;
    background: repeating-linear-gradient(#a5a5a5 0 2px, transparent 2px 4px);
}

.formula-bar .grip {
    margin: 0 13px 0 12px;
}

.entry-buttons {
    flex: 0 0 96px;
    display: flex;
    justify-content: space-around;
    height: 20px;
    margin-right: 2px;
    background: #fdfdfd;
    border: 1px solid #d0d0d0;
}

.fx {
    font-family: "Liberation Serif", serif;
    font-size: 16px;
    font-style: italic;
}

.fx small {
    font-size: 12px;
}

.formula {
    flex: 1;
    padding-right: 2px;
}

/* sheet */

.workbook {
    flex: 1;
    display: flex;
    gap: 2px;
    min-height: 0;
    padding-right: 1px;
    border-bottom: 1px solid #9c9c9c;
}

.sheet {
    flex: 1;
    overflow: hidden;
}

.grid {
    width: 100%;
    table-layout: fixed;
    border-spacing: 0;
    background: #fff;
    border-right: 1px solid #b5b5b5;
}

.grid col {
    width: 56px;
}

.grid .col-head {
    width: 24px;
}

.grid .col-b {
    width: 54px;
}

.grid .col-c {
    width: 57px;
}

.grid .col-rest {
    width: auto;
}

.grid th {
    height: 17px;
    background: #e6e6e6;
    border-right: 1px solid #bdbdbd;
    border-bottom: 1px solid #bdbdbd;
    color: #222;
    font-size: 12px;
    font-weight: 400;
    line-height: 14px;
    text-align: center;
    vertical-align: middle;
}

.grid thead th {
    height: 16px;
    border-bottom-color: #a3a3a3;
}

.grid thead th:last-child {
    border-right: none;
}

.grid .corner svg {
    margin: 2px 2px 0 auto;
}

.grid td {
    border-right: 1px solid #d6d6d6;
    border-bottom: 1px solid #d6d6d6;
}

.grid td:last-child {
    border-right: none;
}

.grid tbody tr:nth-child(5n) th {
    height: 16px;
}

.scroll-y {
    flex: 0 0 13px;
    display: flex;
    flex-direction: column;
    background: #dadada;
}

.scroll-y button,
.scroll-x button {
    flex: 0 0 14px;
    background: #fff;
    border: 1px solid #848484;
}

.scroll-y svg,
.scroll-x svg {
    fill: #555;
}

.thumb {
    flex: 1;
    background: #fff;
    border: 1px solid #777;
}

.scroll-y .thumb {
    margin-bottom: 18px;
}

/* sheet tabs */

.sheet-bar {
    flex: 0 0 19px;
    display: flex;
    align-items: center;
    padding-right: 15px;
}

.sheet-nav {
    display: flex;
    gap: 16px;
    padding: 0 29px 0 19px;
}

.sheet-nav svg {
    fill: #bbb;
}

.sheet-tab {
    align-self: flex-start;
    width: 43px;
    height: 17px;
    background: #fff;
    border-bottom: 2px solid #1f6b3e;
    color: #217346;
    font-weight: 700;
}

.add-sheet {
    margin: 0 auto 0 23px;
}

.sheet-bar .grip {
    margin-right: 11px;
}

.scroll-x {
    flex: 0 0 375px;
    display: flex;
    height: 14px;
    background: #dadada;
}

.scroll-x .thumb {
    margin-right: 21px;
}

/* taskbar */

.taskbar {
    flex: 0 0 20px;
    display: flex;
    overflow: hidden;
    background: #eee;
}

.taskbar > * {
    height: 35px;
}

.task-search {
    flex: 0 0 299px;
    display: flex;
    align-items: center;
    gap: 9px;
    padding-left: 11px;
    background: #fff;
    border: 1px solid #d5d5d5;
}

.task-search svg {
    fill: none;
    stroke: #222;
    stroke-width: 1.4;
}

.task-search input {
    flex: 1;
    font-size: 12px;
}

.task-search input::placeholder {
    color: #444;
}

.apps {
    flex: 0 0 522px;
    display: grid;
    grid-template-columns: repeat(12, 1fr);
}

.apps text {
    font-family: inherit;
}

.tray-app {
    margin-left: auto;
}

.tray-text {
    width: 19px;
    margin-left: 10px;
    overflow: hidden;
    color: #222;
    font-size: 13px;
    line-height: 35px;
}

.pointer {
    position: absolute;
    left: 146px;
    top: 227px;
}
```
